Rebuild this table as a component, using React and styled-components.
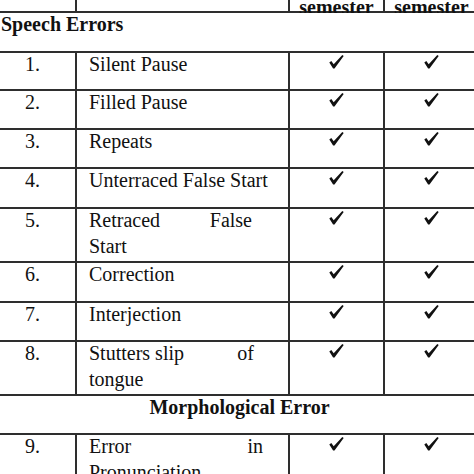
import React from 'react'
import styled, { createGlobalStyle } from 'styled-components'

const GlobalStyle = createGlobalStyle`
    html, body {
        margin: 0;
        padding: 0;
        background: #fff;
    }
`

const rows = [
    { n: '1.', label: 'Silent Pause' },
    { n: '2.', label: 'Filled Pause' },
    { n: '3.', label: 'Repeats' },
    { n: '4.', label: 'Unterraced False Start' },
    { n: '5.', spread: ['Retraced', 'False'], width: 163, rest: 'Start' },
    { n: '6.', label: 'Correction' },
    { n: '7.', label: 'Interjection' },
    { n: '8.', spread: ['Stutters slip', 'of'], width: 165, rest: 'tongue' },
]

const morphRows = [
    { n: '9.', spread: ['Error', 'in'], width: 174, rest: 'Pronunciation' },
]

const Check = () => (
    <svg width="15" height="14" viewBox="0 0 15 14">
        <path d="M0.3 7.6 L2.3 6.1 L4.7 9.2 L13.3 0.1 L14.7 1.1 L5.5 13.5 L4.1 13.5 Z" fill="#111" />
    </svg>
)

const App = () => {
    const renderRow = r => (
        <React.Fragment key={r.n}>
            <NumCell><Text>{r.n}</Text></NumCell>
            <LabelCell>
                {r.spread ? (
                    <Text>
                        <Spread style={{ width: r.width }}>
                            {r.spread.map(w => <span key={w}>{w}</span>)}
                        </Spread>
                        <div>{r.rest}</div>
                    </Text>
                ) : <Text>{r.label}</Text>}
            </LabelCell>
            <MarkCell><Check /></MarkCell>
            <MarkCell><Check /></MarkCell>
        </React.Fragment>
    )

    return (
        <Page>
            <GlobalStyle />
            <Table>
                <HeadCell />
                <HeadCell />
                <HeadCell><HeadText>semester</HeadText></HeadCell>
                <HeadCell><HeadText>semester</HeadText></HeadCell>

                <SectionCell><Text>Speech Errors</Text></SectionCell>
                {rows.map(renderRow)}

                <SectionCell center><Text>Morphological Error</Text></SectionCell>
                {morphRows.map(renderRow)}
            </Table>
        </Page>
    )
}

export default App


const Page = styled.div`
    width: 474px;
    height: 474px;
    overflow: hidden;
    font-family: "Liberation Serif", "Times New Roman", serif;
    font-size: 20px;
    color: #111;
`

const Table = styled.div`
    display: grid;
    grid-template-columns: 85px 211px 93px 93px;
    grid-template-rows: 51px 38px 36px 37px 37px 38px 52px 38px 37px 52px 37px 60px;
    gap: 2px;
    padding: 2px;
    width: 488px;
    margin: -42px 0 0 -12px;
    background: #2e2e2e;
`

const Text = styled.div`
    margin-top: -2px;
`

const Cell = styled.div`
    background: #fff;
    line-height: 26px;
    overflow: hidden;
`

const HeadCell = styled.div`
    background: #fff;
    display: flex;
    flex-direction: column;
    justify-content: flex-end;
    align-items: center;
    font-weight: bold;
    overflow: visible;
`

const HeadText = styled.div`
    line-height: 26px;
    margin-bottom: -9px;
`

const SectionCell = styled(Cell)`
    grid-column: 1 / -1;
    font-weight: bold;
    padding-left: 11px;
    text-align: ${props => props.center ? 'center' : 'left'};
`

const NumCell = styled(Cell)`
    text-align: center;
`

const LabelCell = styled(Cell)`
    padding-left: 12px;
`

const MarkCell = styled(Cell)`
    display: flex;
    justify-content: center;
    align-items: flex-start;
    padding-top: 2px;
`

const Spread = styled.div`
    display: flex;
    justify-content: space-between;
`
